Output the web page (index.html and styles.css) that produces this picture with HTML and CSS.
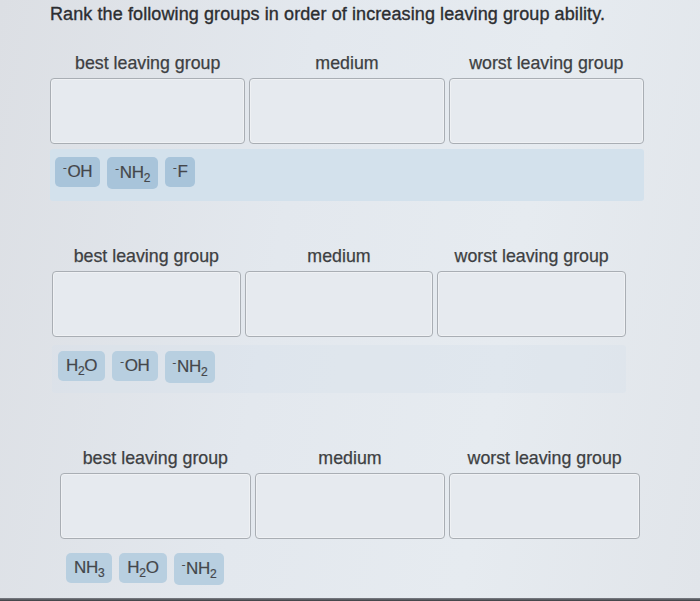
FILE: index.html
```html
<!DOCTYPE html>
<html lang="en">
<head>
<meta charset="utf-8">
<title>Leaving group ranking</title>
<link rel="stylesheet" href="styles.css">
</head>
<body>
<main class="page">
  <h1 class="title">Rank the following groups in order of increasing leaving group ability.</h1>

  <section class="rank rank--first">
    <div class="labels">
      <span class="label">best leaving group</span>
      <span class="label">medium</span>
      <span class="label">worst leaving group</span>
    </div>
    <div class="slots">
      <div class="slot"></div>
      <div class="slot"></div>
      <div class="slot"></div>
    </div>
    <div class="bank bank--strong">
      <span class="chip"><sup>-</sup>OH</span>
      <span class="chip chip--tall"><sup>-</sup>NH<sub>2</sub></span>
      <span class="chip"><sup>-</sup>F</span>
    </div>
  </section>

  <section class="rank rank--second">
    <div class="labels">
      <span class="label">best leaving group</span>
      <span class="label">medium</span>
      <span class="label">worst leaving group</span>
    </div>
    <div class="slots">
      <div class="slot"></div>
      <div class="slot"></div>
      <div class="slot"></div>
    </div>
    <div class="bank bank--faint">
      <span class="chip">H<sub>2</sub>O</span>
      <span class="chip"><sup>-</sup>OH</span>
      <span class="chip chip--tall"><sup>-</sup>NH<sub>2</sub></span>
    </div>
  </section>

  <section class="rank rank--third">
    <div class="labels">
      <span class="label">best leaving group</span>
      <span class="label">medium</span>
      <span class="label">worst leaving group</span>
    </div>
    <div class="slots">
      <div class="slot"></div>
      <div class="slot"></div>
      <div class="slot"></div>
    </div>
    <div class="bank">
      <span class="chip">NH<sub>3</sub></span>
      <span class="chip">H<sub>2</sub>O</span>
      <span class="chip chip--tall"><sup>-</sup>NH<sub>2</sub></span>
    </div>
  </section>
</main>
<div class="bezel"></div>
</body>
</html>
```

FILE: styles.css
```css
html, body {
  margin: 0;
  height: 100%;
}

body {
  background: linear-gradient(100deg, #dcdfe4 0%, #e3e8ee 40%, #e6ebf0 70%, #e1e5ea 100%);
  font-family: "Liberation Sans", Arial, sans-serif;
  color: #3b3d40;
  overflow: hidden;
  position: relative;
}

.page {
  padding-top: 2px;
}

.title {
  margin: 0 0 0 50px;
  font-size: 18px;
  font-weight: normal;
  line-height: 24px;
  color: #2c2e31;
  letter-spacing: 0.1px;
  -webkit-text-stroke: 0.35px #2c2e31;
}

.rank {
  display: flex;
  flex-direction: column;
}

.rank--first {
  margin: 28px 0 0 50px;
  width: 594px;
}

.rank--second {
  margin: 46px 0 0 52px;
  width: 574px;
}

.rank--third {
  margin: 56px 0 0 60px;
  width: 580px;
}

.labels,
.slots {
  display: grid;
  grid-template-columns: 1fr 1fr 1fr;
  column-gap: 4px;
}

.label {
  text-align: center;
  font-size: 17.8px;
  line-height: 18px;
  letter-spacing: 0;
  color: #3d3f42;
  -webkit-text-stroke: 0.25px #3d3f42;
}

.slots {
  margin-top: 6px;
}

.slot {
  height: 64px;
  border: 1px solid #a9aeb4;
  border-radius: 4px;
  background: #e6eaef;
  box-shadow: inset 0 0 0 1px rgba(255, 255, 255, 0.35);
}

.bank {
  display: flex;
  align-items: flex-start;
  gap: 7px;
  margin-top: 8px;
  padding: 6px 6px 10px;
}

.bank--strong {
  margin-top: 5px;
  padding: 8px 5px 12px;
  border-radius: 3px;
  background: #d3e1ec;
}

.bank--faint {
  border-radius: 3px;
  background: rgba(214, 226, 236, 0.4);
}

.chip {
  display: inline-block;
  height: 30px;
  line-height: 30px;
  padding: 0 8px;
  border-radius: 5px;
  background: #b8cfe0;
  font-size: 17px;
  letter-spacing: -0.3px;
  color: #44474b;
  -webkit-text-stroke: 0.2px #44474b;
  white-space: nowrap;
}

.chip--tall {
  height: 32px;
  line-height: 32px;
}

.bank--strong .chip {
  background: #a8c4da;
}

.chip sup {
  font-size: 11px;
  line-height: 0;
  vertical-align: 6px;
  margin-right: 1px;
}

.chip sub {
  font-size: 12px;
  line-height: 0;
  vertical-align: -4px;
}

/* dark edge of the monitor frame along the bottom */
.bezel {
  position: absolute;
  left: 0;
  right: 0;
  bottom: 0;
  height: 3px;
  background: linear-gradient(#7d8087, #3a3c40);
}
```
